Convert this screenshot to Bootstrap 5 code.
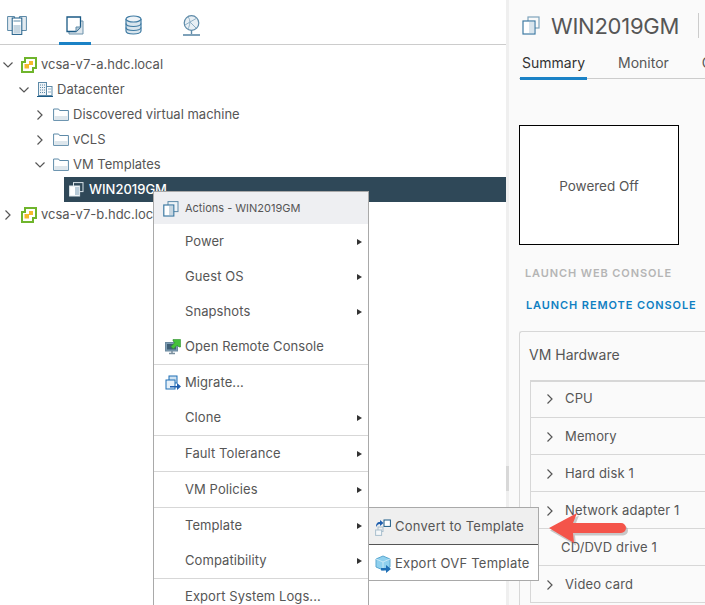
<!DOCTYPE html>
<html lang="en">
<head>
<meta charset="utf-8">
<title>WIN2019GM</title>
<link href="https://cdn.jsdelivr.net/npm/bootstrap@5.3.0/dist/css/bootstrap.min.css" rel="stylesheet">
<style>
html,body{height:605px;overflow:hidden;margin:0;background:#fff}
body{font-family:Inter,"Liberation Sans",sans-serif;font-size:13px;color:#565656;position:relative;width:705px}
.shell{height:605px}
.leftpane{width:506px;flex:none;background:#fff}
.splitter{width:3px;flex:none;background:#efefef;padding-top:466px}
.grip{height:25px;background:#d8d8d8}
.rightpane{flex:1 1 0;min-width:0;background:#fafafa;padding-left:10px;overflow:hidden}
.toptabs{height:45px;border-bottom:1px solid #ccc;padding-left:7px}
.toptab{width:32px;height:44px;margin-right:26px;padding-top:15px;display:flex;justify-content:center}
.toptab svg{flex:none}
.toptab.first{width:20px;margin-right:32px}
.toptab.on{border-bottom:3px solid #1b82c6;height:45px}
.tree{padding-top:7px;position:relative}
.trow{height:25px;white-space:nowrap}
.chev{width:16px;flex:none;display:flex;justify-content:center;margin-right:4px}
.tico{width:17px;flex:none;display:flex;justify-content:center;margin-right:4px}
.lv1{padding-left:16px}.lv2{padding-left:32px}
.selrow{margin-left:64px;background:#2f4858;color:#fff;padding-left:4px;font-weight:500;height:25px}
.title-line{height:50px;gap:11px;padding-left:3px;padding-top:1px;white-space:nowrap}
.title-line svg{flex:none}
.vmname{font-size:22px;font-weight:400;color:#565656;line-height:1;letter-spacing:-.25px}
.vsep{width:1px;height:25px;flex:none;background:#ccc;margin-left:8px}
.subtabs{height:29px;border-bottom:1px solid #ccc;white-space:nowrap;width:300px}
.subtab{padding:0 2px;margin-right:29px;height:29px;line-height:25px;font-size:14px;color:#565656}
.subtab.on{color:#333;border-bottom:3px solid #1b82c6;height:30px}
.first-sub{margin-left:1px}
.consolebox{width:160px;height:120px;border:1px solid #000;background:#fff;margin-top:46px;color:#565656;font-size:13.5px;padding-top:2px}
.conlink{font-size:11px;font-weight:600;letter-spacing:.9px;padding-left:7px;white-space:nowrap}
.greylink{color:#b5b5b5;margin-top:21px;line-height:14px;margin-left:-1px}
.bluelink{color:#0f7fc2;margin-top:18px;line-height:14px}
.hwcard{margin-top:19px;width:220px;height:300px;border:1px solid #d7d7d7;border-radius:3px 0 0 0;background:#fafafa;border-right:0;padding:0 0 0 10px}
.hwtitle{font-size:14px;height:48px;line-height:46px;white-space:nowrap;color:#565656;margin-left:-1px}
.hwlist{border-radius:0;width:200px}
.hwrow{height:37px;background:#fafafa;border-color:#d7d7d7;border-right:0;border-radius:0!important;padding:1px 0 0 13px;font-size:13px;letter-spacing:.15px;color:#565656;white-space:nowrap;margin:0}
.hwrow:first-child{padding-top:0;padding-bottom:1px}
.hwrow .chev{width:12px;margin-right:9px}
.hwrow.plain{padding-left:30px}
.ctxmenu{position:absolute;left:153px;top:191px;width:216px;height:430px;background:#fff;border:1px solid #a9a9a9;border-radius:0;padding:0;margin:0;min-width:0;font-size:13px;color:#565656;display:block;z-index:5}
.ctxhead{height:32px;background:#eeeff2;font-size:11px;padding-left:9px;padding-top:1px;gap:6px}
.ctxhead svg{flex:none}
.ctxitem{height:35px;padding:0 5px 0 31px;color:#565656;font-size:13px;letter-spacing:.08px;position:relative;white-space:nowrap}
.ctxitem.withico{padding-left:11px;gap:4px}
.ctxitem svg{flex:none}
.ctxitem:hover{background:transparent;color:#565656}
.tri{margin-left:auto;width:0;height:0;border-left:5px solid #333;border-top:3.5px solid transparent;border-bottom:3.5px solid transparent;margin-right:1px}
.ctxgroup{border-bottom:1px solid #d7d7d7;height:36px}
.submenu{position:absolute;left:368px;top:507px;width:171px;height:74px;background:#fff;border:1px solid #a9a9a9;z-index:6;border-radius:0;padding:1px 0 0 6px;margin:0;min-width:0;display:block}
.subitem{height:36px;padding:1px 0 0 6px;margin-left:-6px;width:auto;gap:4px;font-size:13px;letter-spacing:.25px;color:#565656;white-space:nowrap}
.subitem svg{flex:none}
.subitem.hot{background:#efefef;border-bottom:1px solid #555;height:37px;margin-top:-1px}
.subitem:hover{color:#565656}
.redarrow{position:absolute;left:545px;top:510px;z-index:7}
</style>
</head>
<body>
<div class="shell d-flex">
  <div class="leftpane">
    <div class="toptabs d-flex">
      <div class="toptab first">
        <svg width="20" height="20" viewBox="0 0 20 20" fill="none"><path d="M.6 1.500h7v14h-7zM12.400 1.500h7v14h-7z" stroke="#5d8aa8" fill="#e3ebf1"/><rect x="5.200" y="3" width="9.600" height="16.400" fill="#fff" stroke="#1b5a85"/><rect x="6.500" y="10" width="7" height="8.400" fill="#c6d6e1"/><path d="M6.500 6h7" stroke="#5d8aa8"/></svg>
      </div>
      <div class="toptab on">
        <svg width="18" height="20" viewBox="0 0 18 20" fill="none"><path d="M3 6h14v13H3z" fill="#dde6ec" stroke="#6c93ac"/><path d="M1 2h13.500v10L10 16.500H1z" fill="#fff" stroke="#1b5a85" stroke-width="1.300"/><path d="M14.500 12H10v4.500" fill="#b8cbd8" stroke="#5d8aa8"/></svg>
      </div>
      <div class="toptab">
        <svg width="17" height="20" viewBox="0 0 17 20" fill="none" stroke="#3f7ba3" stroke-width="1.200"><path d="M1 4v12c0 4 15 4 15 0V4" fill="#d9e5ed"/><ellipse cx="8.500" cy="4" rx="7.500" ry="3" fill="#eef3f7"/><path d="M1 8.500c0 4 15 4 15 0M1 12.500c0 4 15 4 15 0"/></svg>
      </div>
      <div class="toptab">
        <svg width="19" height="21" viewBox="0 0 19 21" fill="none" stroke="#5d8aa8"><circle cx="9.500" cy="8" r="7.300" fill="#e8eff4" stroke-width="1.200"/><path d="M3 10l5-3 7-4M8 7l6 6M6 2c3 3 2 8 0 12" stroke="#8fb0c6"/><path d="M9.500 15.500V19" stroke-width="1.400"/><path d="M1 20h17" stroke-width="1.600"/></svg>
      </div>
    </div>
    <div class="tree">
      <div class="trow d-flex align-items-center">
        <span class="chev"><svg width="12" height="8" viewBox="0 0 12 8" fill="none" stroke="#565656" stroke-width="1.200"><path d="M1.500 1.500 6 6l4.500-4.500"/></svg></span>
        <span class="tico"><svg width="16" height="16" viewBox="0 0 16 16"><path d="M4 1h11v10h-3v4H1V5h3z" fill="#fff" stroke="#6fb52c" stroke-width="2"/><rect x="3.500" y="7" width="4.500" height="4.500" fill="#f3b92c"/><rect x="8" y="4" width="4" height="4" fill="#f3b92c"/></svg></span>
        <span>vcsa-v7-a.hdc.local</span>
      </div>
      <div class="trow d-flex align-items-center lv1">
        <span class="chev"><svg width="12" height="8" viewBox="0 0 12 8" fill="none" stroke="#565656" stroke-width="1.200"><path d="M1.500 1.500 6 6l4.500-4.500"/></svg></span>
        <span class="tico"><svg width="16" height="15" viewBox="0 0 16 15" fill="none"><rect x="1.500" y=".5" width="8" height="13" fill="#eef3f7" stroke="#5d8aa8"/><rect x="9.500" y="4.500" width="5.500" height="9" fill="#fff" stroke="#5d8aa8"/><path d="M3 3h5M3 5.500h5M3 8h5M3 10.500h5" stroke="#5d8aa8" stroke-dasharray="1 1"/><path d="M11 7h3M11 10h3" stroke="#8fb0c6"/><path d="M0 14.500h16" stroke="#1b5a85"/></svg></span>
        <span>Datacenter</span>
      </div>
      <div class="trow d-flex align-items-center lv2">
        <span class="chev"><svg width="8" height="12" viewBox="0 0 8 12" fill="none" stroke="#565656" stroke-width="1.200"><path d="M1.500 1.500 6 6l-4.500 4.500"/></svg></span>
        <span class="tico"><svg width="16" height="13" viewBox="0 0 16 13" fill="none"><path d="M.6 12.400V1h5l1 1.500h8.800v9.900z" fill="#fff" stroke="#5d8aa8"/><rect x="1.500" y="8" width="13" height="4" fill="#dde6ec"/></svg></span>
        <span>Discovered virtual machine</span>
      </div>
      <div class="trow d-flex align-items-center lv2">
        <span class="chev"><svg width="8" height="12" viewBox="0 0 8 12" fill="none" stroke="#565656" stroke-width="1.200"><path d="M1.500 1.500 6 6l-4.500 4.500"/></svg></span>
        <span class="tico"><svg width="16" height="13" viewBox="0 0 16 13" fill="none"><path d="M.6 12.400V1h5l1 1.500h8.800v9.900z" fill="#fff" stroke="#5d8aa8"/><rect x="1.500" y="8" width="13" height="4" fill="#dde6ec"/></svg></span>
        <span>vCLS</span>
      </div>
      <div class="trow d-flex align-items-center lv2">
        <span class="chev"><svg width="12" height="8" viewBox="0 0 12 8" fill="none" stroke="#565656" stroke-width="1.200"><path d="M1.500 1.500 6 6l4.500-4.500"/></svg></span>
        <span class="tico"><svg width="16" height="13" viewBox="0 0 16 13" fill="none"><path d="M.6 12.400V1h5l1 1.500h8.800v9.900z" fill="#fff" stroke="#5d8aa8"/><rect x="1.500" y="8" width="13" height="4" fill="#dde6ec"/></svg></span>
        <span>VM Templates</span>
      </div>
      <div class="selrow d-flex align-items-center">
        <span class="tico"><svg width="15" height="15" viewBox="0 0 15 15" fill="none"><rect x="4.500" y=".6" width="9.500" height="9" stroke="#dce6ec" fill="#2f4858"/><rect x=".6" y="4" width="10" height="10" fill="#fff" stroke="#dce6ec"/><rect x="6" y="5" width="4" height="8" fill="#b8cbd8"/></svg></span>
        <span>WIN2019GM</span>
      </div>
      <div class="trow d-flex align-items-center">
        <span class="chev"><svg width="8" height="12" viewBox="0 0 8 12" fill="none" stroke="#565656" stroke-width="1.200"><path d="M1.500 1.500 6 6l-4.500 4.500"/></svg></span>
        <span class="tico"><svg width="16" height="16" viewBox="0 0 16 16"><path d="M4 1h11v10h-3v4H1V5h3z" fill="#fff" stroke="#6fb52c" stroke-width="2"/><rect x="3.500" y="7" width="4.500" height="4.500" fill="#f3b92c"/><rect x="8" y="4" width="4" height="4" fill="#f3b92c"/></svg></span>
        <span>vcsa-v7-b.hdc.local</span>
      </div>
    </div>
  </div>
  <div class="splitter"><div class="grip"></div></div>
  <div class="rightpane">
    <div class="title-line d-flex align-items-center">
      <svg width="18" height="19" viewBox="0 0 18 19" fill="none" stroke="#3f7ba3" stroke-width="1.200"><rect x="6" y="1" width="11" height="11" fill="#fafafa" stroke="#7ea3bb"/><rect x="1" y="5" width="12" height="13" fill="#fff"/><rect x="7" y="6" width="5" height="11" fill="#d9e5ed" stroke="none"/></svg>
      <span class="vmname">WIN2019GM</span>
      <span class="vsep"></span>
    </div>
    <div class="subtabs d-flex">
      <div class="subtab on first-sub">Summary</div>
      <div class="subtab">Monitor</div>
      <div class="subtab">Configure</div>
    </div>
    <div class="consolebox d-flex align-items-center justify-content-center">Powered Off</div>
    <div class="conlink greylink">LAUNCH WEB CONSOLE</div>
    <div class="conlink bluelink">LAUNCH REMOTE CONSOLE</div>
    <div class="card hwcard">
      <div class="hwtitle">VM Hardware</div>
      <div class="list-group hwlist">
        <div class="list-group-item hwrow d-flex align-items-center"><span class="chev"><svg width="8" height="12" viewBox="0 0 8 12" fill="none" stroke="#565656" stroke-width="1.200"><path d="M1.500 1.500 6 6l-4.500 4.500"/></svg></span>CPU</div>
        <div class="list-group-item hwrow d-flex align-items-center"><span class="chev"><svg width="8" height="12" viewBox="0 0 8 12" fill="none" stroke="#565656" stroke-width="1.200"><path d="M1.500 1.500 6 6l-4.500 4.500"/></svg></span>Memory</div>
        <div class="list-group-item hwrow d-flex align-items-center"><span class="chev"><svg width="8" height="12" viewBox="0 0 8 12" fill="none" stroke="#565656" stroke-width="1.200"><path d="M1.500 1.500 6 6l-4.500 4.500"/></svg></span>Hard disk 1</div>
        <div class="list-group-item hwrow d-flex align-items-center"><span class="chev"><svg width="8" height="12" viewBox="0 0 8 12" fill="none" stroke="#565656" stroke-width="1.200"><path d="M1.500 1.500 6 6l-4.500 4.500"/></svg></span>Network adapter 1</div>
        <div class="list-group-item hwrow plain d-flex align-items-center">CD/DVD drive 1</div>
        <div class="list-group-item hwrow d-flex align-items-center"><span class="chev"><svg width="8" height="12" viewBox="0 0 8 12" fill="none" stroke="#565656" stroke-width="1.200"><path d="M1.500 1.500 6 6l-4.500 4.500"/></svg></span>Video card</div>
      </div>
    </div>
  </div>
</div>

<div class="dropdown-menu ctxmenu">
  <div class="ctxhead d-flex align-items-center">
    <svg width="16" height="16" viewBox="0 0 16 16" fill="none"><rect x="5" y=".6" width="10" height="10" stroke="#5d8aa8" fill="#eef3f7"/><rect x=".8" y="4" width="10" height="11" fill="#fff" stroke="#3f7ba3" stroke-width="1.200"/><rect x="6" y="5" width="4" height="9" fill="#c6d6e1"/></svg>
    <span>Actions - WIN2019GM</span>
  </div>
  <div class="dropdown-item ctxitem d-flex align-items-center">Power<span class="tri"></span></div>
  <div class="dropdown-item ctxitem d-flex align-items-center">Guest OS<span class="tri"></span></div>
  <div class="dropdown-item ctxitem d-flex align-items-center">Snapshots<span class="tri"></span></div>
  <div class="dropdown-item ctxitem withico d-flex align-items-center ctxgroup">
    <svg width="16" height="16" viewBox="0 0 16 16" fill="none"><rect x=".5" y="3.500" width="12" height="8.500" fill="#7f9db3" stroke="#6c8aa0"/><rect x="2" y="5" width="9" height="5.500" fill="#3f5f75"/><path d="M4 14.500h6M7 12v2.500" stroke="#7a8f9e" stroke-width="1.500"/><path d="M6 7.500 9.800 3.700 8 2V.5h7.500V8H14l-1.800-1.800L8.400 10z" fill="#45c23a" stroke="#2f8f2a" stroke-width=".6"/></svg>
    <span>Open Remote Console</span>
  </div>
  <div class="dropdown-item ctxitem withico d-flex align-items-center">
    <svg width="16" height="16" viewBox="0 0 16 16" fill="none"><rect x="4" y="1" width="8" height="7" fill="#cfe2f1" stroke="#1f6fb5"/><rect x="1" y="5" width="9" height="9" fill="#e6f0f8" stroke="#1f6fb5"/><path d="M5 11h7V8l4 3.500-4 3.500v-2.500H5z" fill="#1f5fae"/></svg>
    <span>Migrate...</span>
  </div>
  <div class="dropdown-item ctxitem d-flex align-items-center ctxgroup">Clone<span class="tri"></span></div>
  <div class="dropdown-item ctxitem d-flex align-items-center ctxgroup">Fault Tolerance<span class="tri"></span></div>
  <div class="dropdown-item ctxitem d-flex align-items-center ctxgroup">VM Policies<span class="tri"></span></div>
  <div class="dropdown-item ctxitem d-flex align-items-center">Template<span class="tri"></span></div>
  <div class="dropdown-item ctxitem d-flex align-items-center ctxgroup">Compatibility<span class="tri"></span></div>
  <div class="dropdown-item ctxitem d-flex align-items-center">Export System Logs...</div>
</div>

<div class="dropdown-menu submenu">
  <div class="dropdown-item subitem hot d-flex align-items-center">
    <svg width="16" height="18" viewBox="0 0 16 18" fill="none"><rect x="3" y="9" width="5" height="4.500" stroke="#a9bfce"/><rect x=".6" y="12" width="6" height="5.400" stroke="#a9bfce" fill="#f4f7f9"/><rect x="9" y="2" width="6.400" height="6.400" stroke="#1b5a85" fill="#fff"/><path d="M1 9c0-3 1-5 4-5V2l3.500 3L5 8V6C3 6 2.500 7 1 9z" fill="#1f5fae"/></svg>
    <span>Convert to Template</span>
  </div>
  <div class="dropdown-item subitem d-flex align-items-center">
    <svg width="16" height="18" viewBox="0 0 16 18" fill="none"><path d="M8 1l7 3v8l-7 3-7-3V4z" fill="#8fd0ee" stroke="#5aa7d0"/><path d="M1 4l7 3 7-3M8 7v8" stroke="#c8e8f6"/><path d="M6 13h5v-3l5 4-5 4v-2.500H6z" fill="#1f6fb5"/></svg>
    <span>Export OVF Template</span>
  </div>
</div>

<svg class="redarrow" width="84" height="38" viewBox="0 0 84 38">
  <path d="M4 19 33 4 29 14 77 14a4.500 4.500 0 0 1 0 10L29 24 30 34z" fill="#6b6b6b" opacity=".35" transform="translate(1 1.500)"/>
  <path d="M4 18 32 3 28 13 76 13a5 5 0 0 1 0 10L28 23 29 33z" fill="#f4544a"/>
</svg>
</body>
</html>
